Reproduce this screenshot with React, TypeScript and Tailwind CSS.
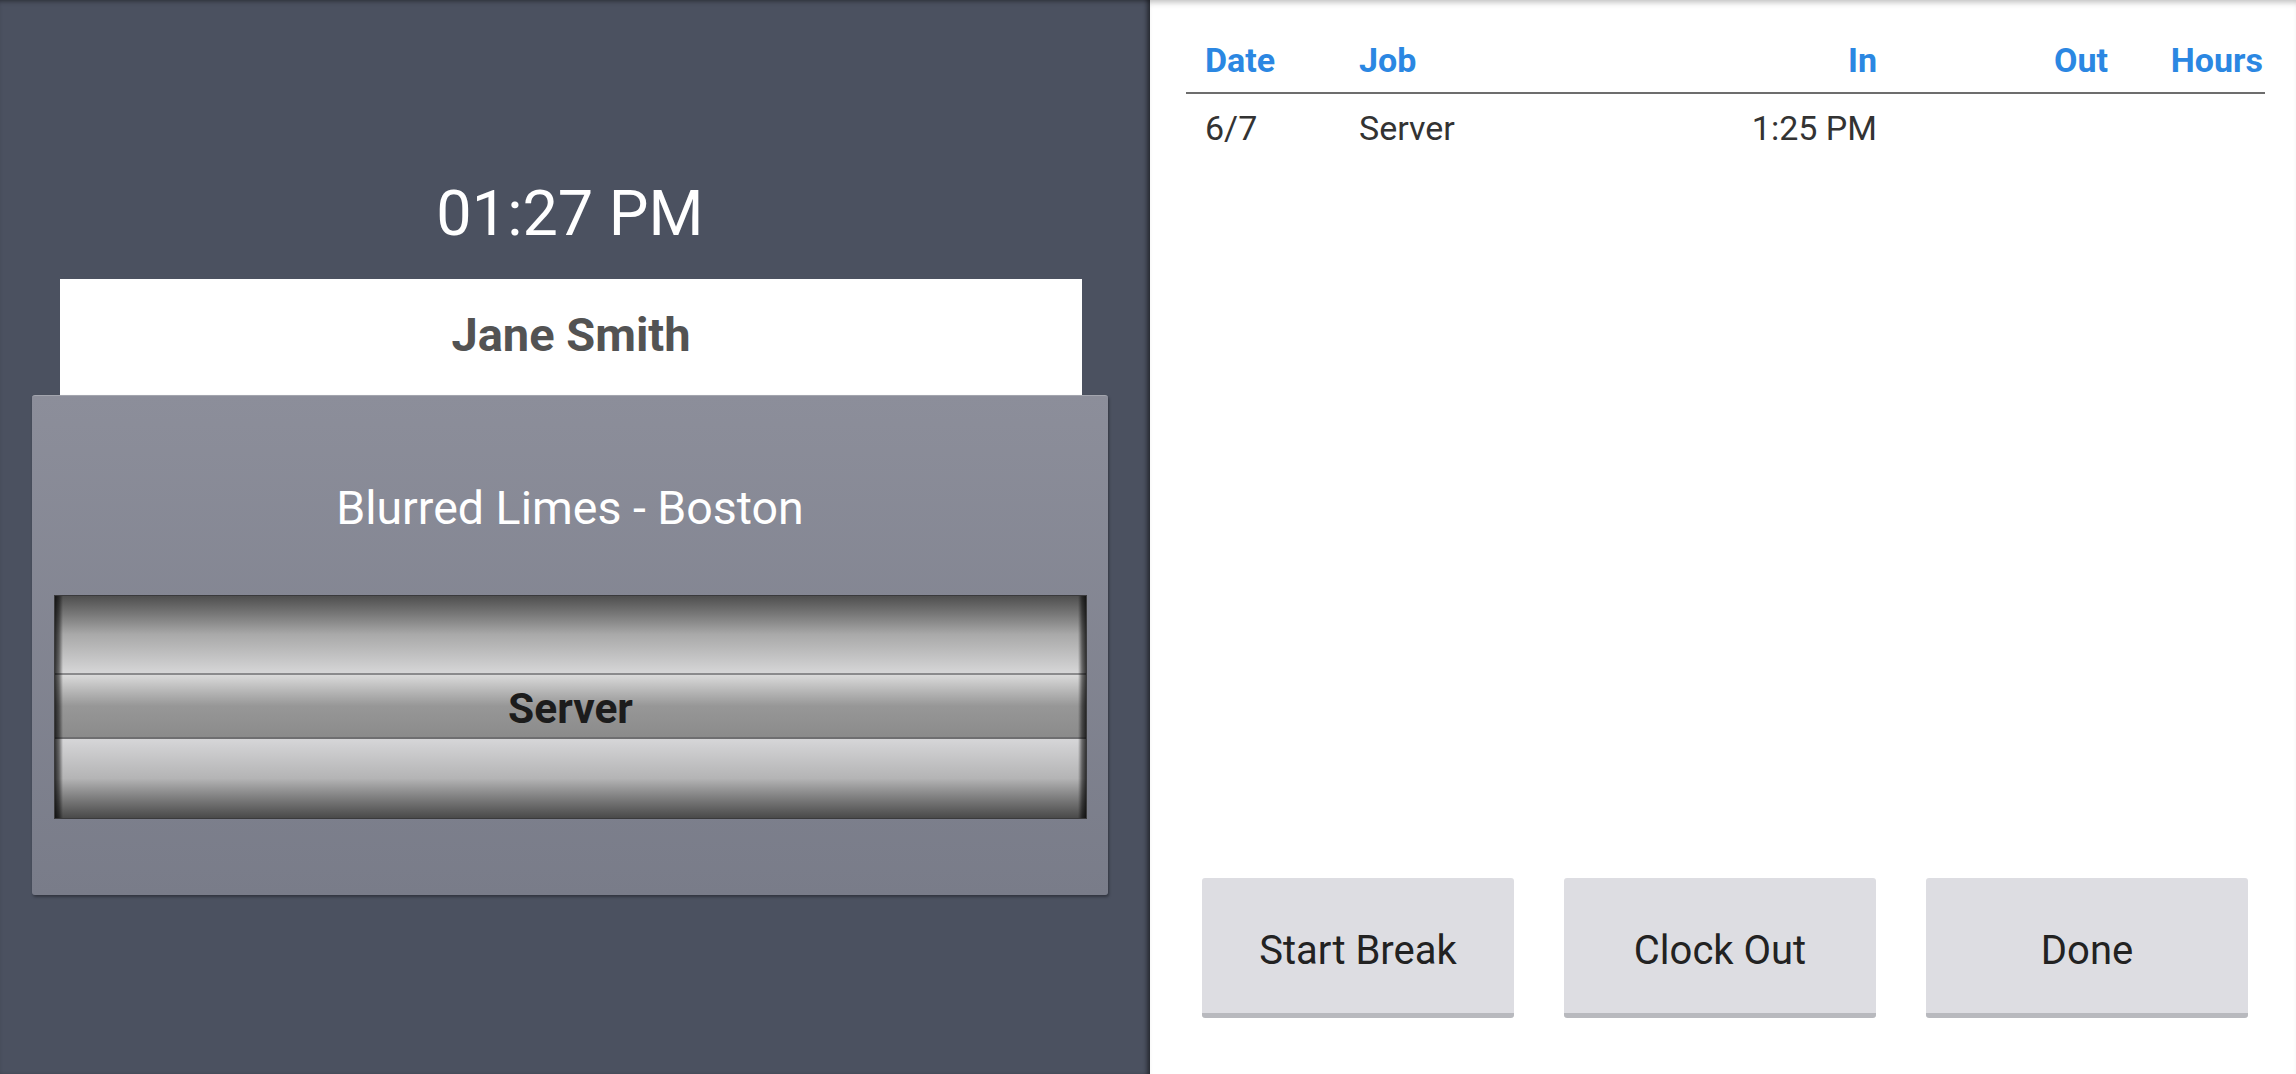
import React from 'react'

const font = { fontFamily: 'Roboto, "Liberation Sans", sans-serif' }

const rows = [{ date: '6/7', job: 'Server', clockIn: '1:25 PM', clockOut: '', hours: '' }]

const ClockPanel = () => {
  return (
    <div className="w-[1150px] h-[1074px] shrink-0 bg-[#4b5160] shadow-[inset_0_4px_4px_-2px_rgba(0,0,0,0.3),inset_-5px_0_4px_-2px_rgba(0,0,0,0.45)]">
      <div className="ml-[32px] w-[1076px] pt-[182px] flex flex-col">
        <p className="text-center text-[63px] leading-none text-white">01:27 PM</p>

        <div className="mt-[34px] ml-[28px] w-[1022px] h-[116px] pb-[5px] bg-white flex items-center justify-center">
          <p className="text-[47px] font-bold leading-none text-[#535353]">Jane Smith</p>
        </div>

        <div className="w-[1076px] h-[500px] rounded-[3px] bg-gradient-to-b from-[#8c8e9a] to-[#797c89] border-t border-[#a3a5ae] shadow-[1px_2px_3px_rgba(0,0,0,0.35)]">
          <div className="h-[199px] pt-[26px] flex items-center justify-center">
            <p className="text-[46.5px] leading-none text-white">Blurred Limes - Boston</p>
          </div>

          {/* job picker wheel */}
          <div className="relative ml-[22px] w-[1033px] h-[224px] border border-[#3a3a3c] flex flex-col">
            <div className="h-[77px] bg-gradient-to-b from-[#4f4f4f] via-[#a9a9a9] to-[#d6d6d7]"></div>
            <div className="h-[2px] bg-[#8a8a8c]"></div>
            <div className="h-[62px] pt-[7px] flex items-center justify-center bg-gradient-to-b from-[#dadada] via-[#979797] to-[#8b8b8b]">
              <p className="text-[42.5px] font-bold leading-none text-[#1c1c1c]">Server</p>
            </div>
            <div className="h-[2px] bg-[#6e6e70]"></div>
            <div className="h-[79px] bg-gradient-to-b from-[#d6d6d8] via-[#b4b4b5] to-[#4a4a4a]"></div>

            <div className="pointer-events-none absolute inset-y-0 left-0 w-[8px] bg-gradient-to-r from-black/75 via-black/50 to-transparent"></div>
            <div className="pointer-events-none absolute inset-y-0 right-0 w-[8px] bg-gradient-to-l from-black/75 via-black/50 to-transparent"></div>
          </div>
        </div>
      </div>
    </div>
  )
}

const Timesheet = () => {
  return (
    <div className="flex-1 h-[1074px] bg-white flex flex-col pl-[36px] pr-[31px] pt-[43px] pb-[56px] shadow-[inset_0_6px_6px_-4px_rgba(0,0,0,0.28)]">
      <div className="flex text-[34px] font-bold leading-none text-[#2b87e2] pb-[15px] border-b-2 border-[#6d6d6d]">
        <div className="w-[154px] pl-[19px]">Date</div>
        <div className="w-[260px] pl-[19px]">Job</div>
        <div className="w-[277px] text-right">In</div>
        <div className="w-[231px] text-right">Out</div>
        <div className="w-[157px] text-right pr-[2px]">Hours</div>
      </div>

      {rows.map((r, i) => (
        <div key={i} className="flex text-[34px] leading-none text-[#333333] pt-[17px]">
          <div className="w-[154px] pl-[19px]">{r.date}</div>
          <div className="w-[260px] pl-[19px]">{r.job}</div>
          <div className="w-[277px] text-right">{r.clockIn}</div>
          <div className="w-[231px] text-right">{r.clockOut}</div>
          <div className="w-[157px] text-right">{r.hours}</div>
        </div>
      ))}

      <div className="mt-auto ml-[16px] flex gap-[50px]">
        {[
          { label: 'Start Break', w: 'w-[312px]' },
          { label: 'Clock Out', w: 'w-[312px]' },
          { label: 'Done', w: 'w-[322px]' },
        ].map((b) => (
          <button
            key={b.label}
            className={`${b.w} h-[140px] pt-[10px] rounded-[3px] bg-[#dddde2] border-b-[5px] border-[#b8b9be] flex items-center justify-center text-[40px] leading-none text-[#222222]`}
          >
            {b.label}
          </button>
        ))}
      </div>
    </div>
  )
}

export default function App() {
  return (
    <div className="w-[2296px] h-[1074px] flex overflow-hidden" style={font}>
      <ClockPanel />
      <Timesheet />
    </div>
  )
}
